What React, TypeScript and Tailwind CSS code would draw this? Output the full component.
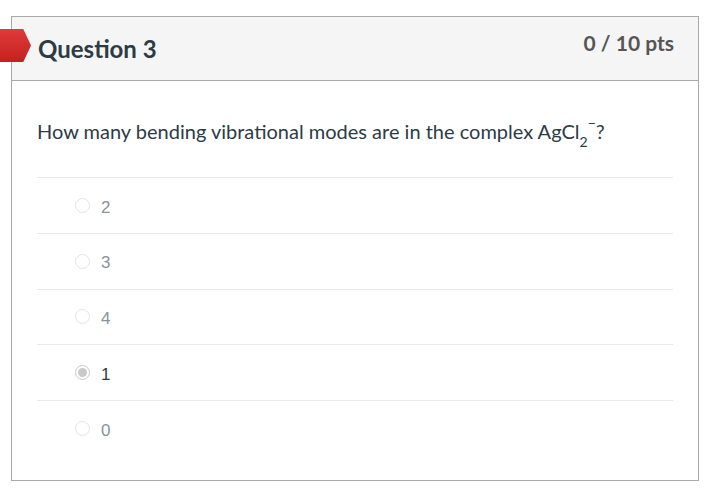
import React from "react";

const OPTIONS = [
  { label: "2", selected: false },
  { label: "3", selected: false },
  { label: "4", selected: false },
  { label: "1", selected: true },
  { label: "0", selected: false },
];

function Radio({ selected }: { selected: boolean }) {
  return (
    <span
      className={`w-[15px] h-[15px] rounded-full border flex items-center justify-center flex-shrink-0 ${
        selected ? "border-[#c8c8c8] bg-white" : "border-[#e3e3e3] bg-white"
      }`}
    >
      {selected && <span className="w-[9px] h-[9px] rounded-full bg-[#c9c9c9]" />}
    </span>
  );
}

export default function App() {
  return (
    <div className="w-[726px] h-[499px] bg-white relative font-['Lato','Noto_Sans',sans-serif]">
      <div className="pt-[16px] pl-[11px]">
        <div className="w-[688px] h-[465px] border border-[#a9a9a9] bg-white">
          {/* header */}
          <div className="h-[64px] bg-[#f5f5f5] border-b border-[#a9a9a9] flex justify-between pl-[26px] pr-[24px]">
            <h2 className="text-[24px] font-bold text-[#2d3b45] pt-[17px] leading-[30px]">Question 3</h2>
            <div className="text-[21px] font-bold text-[#555] pt-[13px] leading-[26px]">0 / 10 pts</div>
          </div>

          {/* body */}
          <div className="px-[25px] pt-[36px]">
            <p className="text-[20px] text-[#2d3b45] leading-[28px]">
              How many bending vibrational modes are in the complex AgCl
              <sub className="text-[14px] align-[-4px] leading-none">2</sub>
              <sup className="text-[14px] align-[4px] leading-none">−</sup>?
            </p>
            <div className="mt-[32px]">
              {OPTIONS.map((o, i) => (
                <div
                  key={i}
                  className="h-[55.75px] border-t border-[#eaeaea] flex items-center pl-[38px] gap-[11px]"
                >
                  <Radio selected={o.selected} />
                  <span
                    className={`font-['Liberation_Sans',Arial,sans-serif] text-[17px] pt-[4px] ${
                      o.selected ? "text-[#2d3b45]" : "text-[#8a9299]"
                    }`}
                  >
                    {o.label}
                  </span>
                </div>
              ))}
            </div>
          </div>
        </div>
      </div>

      {/* red flag */}
      <div className="absolute left-0 top-[29px] w-[31px] h-[33px] bg-gradient-to-b from-[#e03a3a] to-[#c42020] [clip-path:polygon(0_0,75%_0,100%_50%,75%_100%,0_100%)]" />
    </div>
  );
}
